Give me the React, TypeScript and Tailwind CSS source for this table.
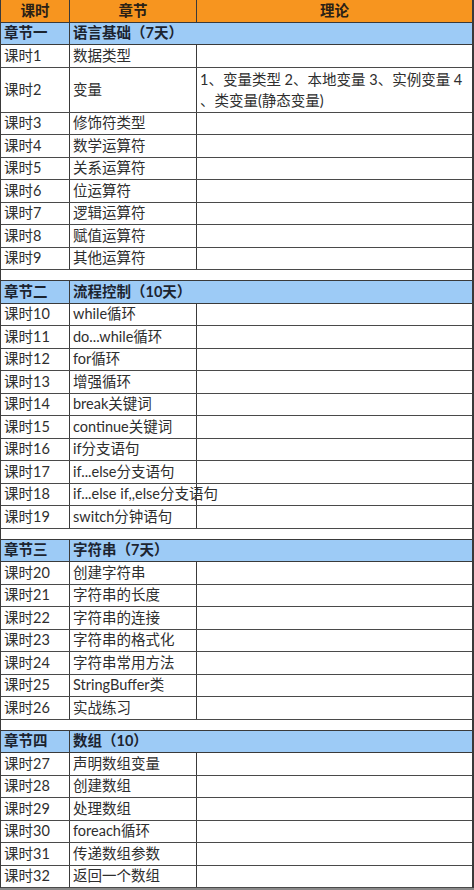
import React from "react";

type Lesson = { no: number; title: string; theory?: string[] };
type Chapter = { name: string; title: string; lessons: Lesson[] };

const chapters: Chapter[] = [
  {
    name: "章节一",
    title: "语言基础（7天）",
    lessons: [
      { no: 1, title: "数据类型" },
      { no: 2, title: "变量", theory: ["1、变量类型 2、本地变量 3、实例变量 4", "、类变量(静态变量)"] },
      { no: 3, title: "修饰符类型" },
      { no: 4, title: "数学运算符" },
      { no: 5, title: "关系运算符" },
      { no: 6, title: "位运算符" },
      { no: 7, title: "逻辑运算符" },
      { no: 8, title: "赋值运算符" },
      { no: 9, title: "其他运算符" },
    ],
  },
  {
    name: "章节二",
    title: "流程控制（10天）",
    lessons: [
      { no: 10, title: "while循环" },
      { no: 11, title: "do...while循环" },
      { no: 12, title: "for循环" },
      { no: 13, title: "增强循环" },
      { no: 14, title: "break关键词" },
      { no: 15, title: "continue关键词" },
      { no: 16, title: "if分支语句" },
      { no: 17, title: "if...else分支语句" },
      { no: 18, title: "if...else if,,else分支语句" },
      { no: 19, title: "switch分钟语句" },
    ],
  },
  {
    name: "章节三",
    title: "字符串（7天）",
    lessons: [
      { no: 20, title: "创建字符串" },
      { no: 21, title: "字符串的长度" },
      { no: 22, title: "字符串的连接" },
      { no: 23, title: "字符串的格式化" },
      { no: 24, title: "字符串常用方法" },
      { no: 25, title: "StringBuffer类" },
      { no: 26, title: "实战练习" },
    ],
  },
  {
    name: "章节四",
    title: "数组（10）",
    lessons: [
      { no: 27, title: "声明数组变量" },
      { no: 28, title: "创建数组" },
      { no: 29, title: "处理数组" },
      { no: 30, title: "foreach循环" },
      { no: 31, title: "传递数组参数" },
      { no: 32, title: "返回一个数组" },
    ],
  },
];

function LessonRow({ lesson }: { lesson: Lesson }) {
  const tall = !!lesson.theory;
  return (
    <div className={`flex border-b border-[#4a4a4a] ${tall ? "h-[45px]" : "h-[22.5px]"}`}>
      <div className="w-[69px] border-r border-[#3a3a3a] flex items-center pl-[3px]">课时{lesson.no}</div>
      <div className="w-[127px] border-r border-[#3a3a3a] flex items-center pl-[3px] whitespace-nowrap">{lesson.title}</div>
      <div className="flex-1 flex flex-col justify-center pl-[3px] leading-[21px]">
        {lesson.theory?.map((t) => (
          <div key={t} className="whitespace-nowrap">{t}</div>
        ))}
      </div>
    </div>
  );
}

function ChapterBlock({ chapter, first }: { chapter: Chapter; first: boolean }) {
  return (
    <>
      {!first && <div className="h-[11px] bg-white border-b border-[#3a3a3a]" />}
      <div className="flex h-[22.5px] bg-[#9dcbf6] border-b border-[#3a3a3a] font-bold text-[#1c2430]">
        <div className="w-[69px] border-r border-[#3a3a3a] flex items-center pl-[3px]">{chapter.name}</div>
        <div className="flex-1 flex items-center pl-[3px]">{chapter.title}</div>
      </div>
      {chapter.lessons.map((l) => (
        <LessonRow key={l.no} lesson={l} />
      ))}
    </>
  );
}

export default function App() {
  return (
    <div
      className="w-[474px] h-[890px] bg-white overflow-hidden text-[14.5px] text-[#2e2e2e]"
      style={{ fontFamily: 'Lato, "Noto Sans CJK SC", sans-serif' }}
    >
      <div className="border-l border-r-2 border-[#3a3a3a]">
        <div className="flex h-[22.5px] bg-[#f7951f] border-b border-[#3a3a3a] font-bold text-[#2a2116]">
          <div className="w-[69px] border-r border-[#3a3a3a] flex items-center justify-center">课时</div>
          <div className="w-[127px] border-r border-[#3a3a3a] flex items-center justify-center">章节</div>
          <div className="flex-1 flex items-center justify-center">理论</div>
        </div>
        {chapters.map((c, i) => (
          <ChapterBlock key={c.name} chapter={c} first={i === 0} />
        ))}
      </div>
      <div className="h-[2px] bg-[#8a8a8a]" />
    </div>
  );
}
